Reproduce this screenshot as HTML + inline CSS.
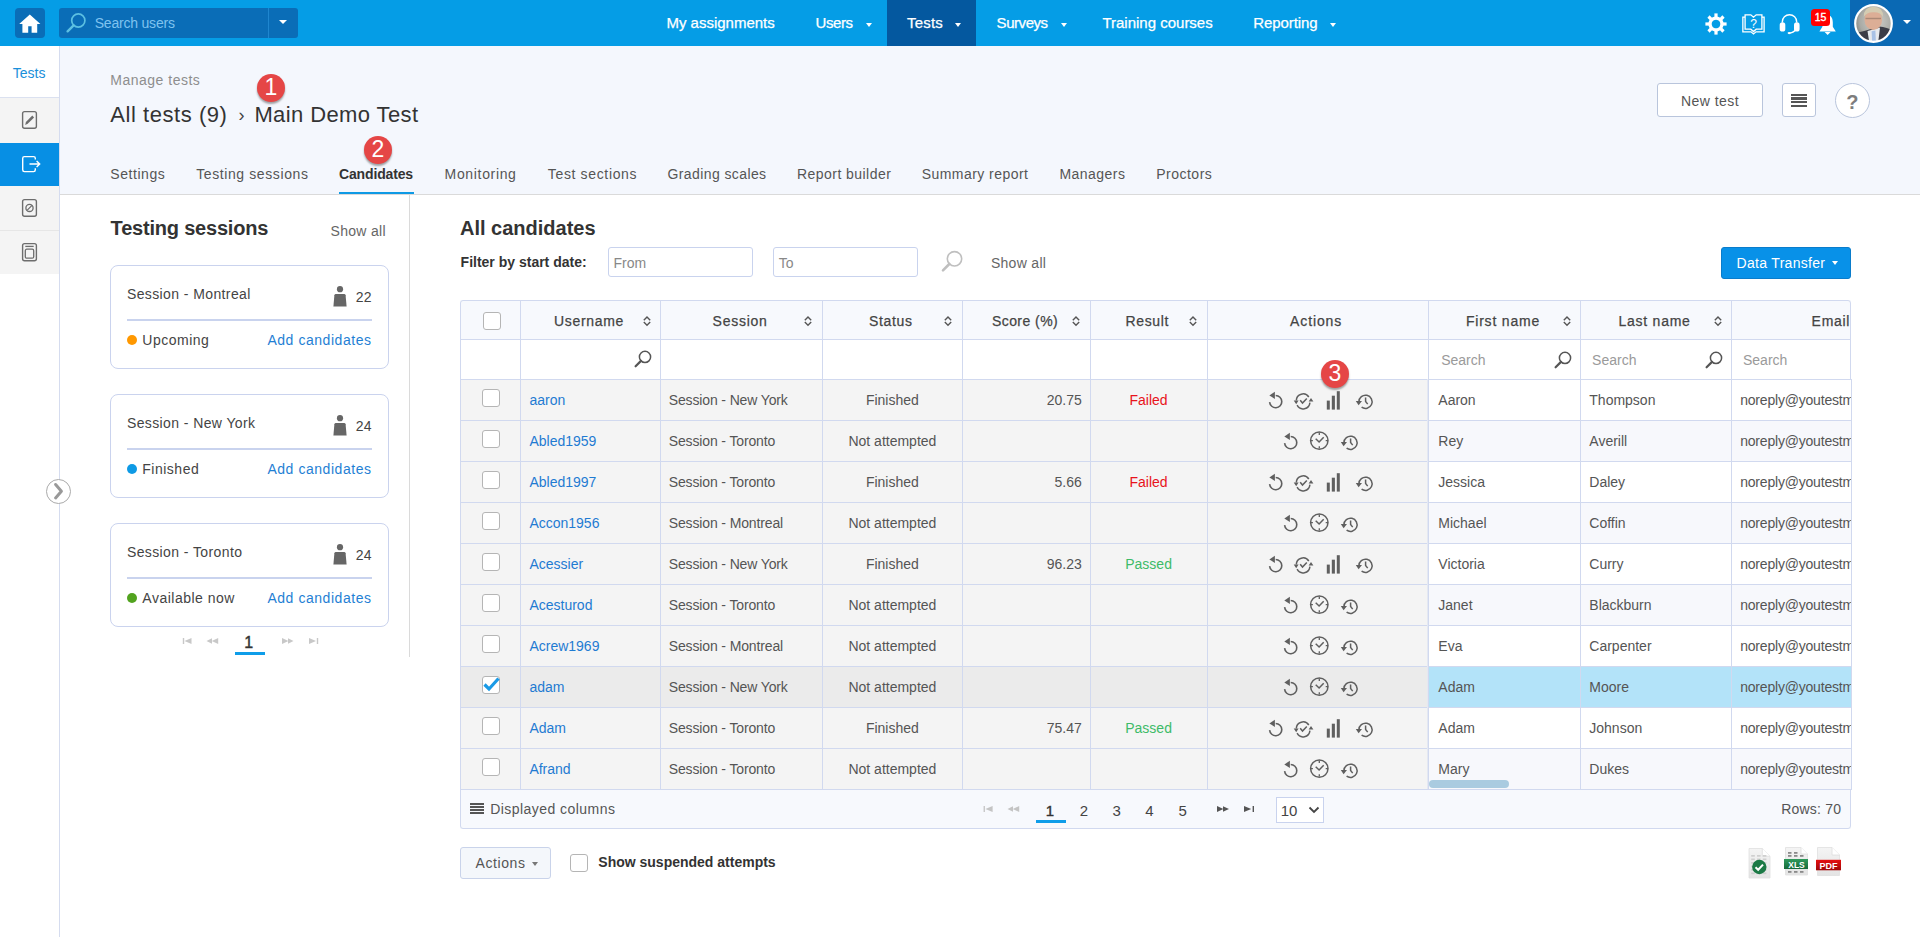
<!DOCTYPE html>
<html><head><meta charset="utf-8"><title>Candidates</title>
<style>
html,body{margin:0;padding:0;}
body{width:1920px;height:937px;position:relative;overflow:hidden;background:#fff;font-family:"Liberation Sans", sans-serif;}
.t{position:absolute;white-space:nowrap;font-family:"Liberation Sans", sans-serif;}
svg{overflow:visible}
</style></head><body>
<div style="position:absolute;left:0px;top:0px;width:1920px;height:46px;background:#059de6"></div>
<div style="position:absolute;left:15px;top:8px;width:30px;height:30px;background:#0a6db7;border-radius:4px"></div>
<svg style="position:absolute;left:15px;top:8px;" width="30" height="30" viewBox="0 0 30 30"><path d="M14.8 6.6 L25.4 16 L22.2 16 L22.2 24.8 L16.6 24.8 L16.6 18.2 L13.2 18.2 L13.2 24.8 L7.4 24.8 L7.4 16 L4.2 16 Z" fill="#fff"/></svg>
<div style="position:absolute;left:59px;top:8px;width:239px;height:30px;background:#0a6db7;border-radius:3px"></div>
<div style="position:absolute;left:268px;top:8px;width:1px;height:30px;background:#1f86cf"></div>
<svg style="position:absolute;left:62px;top:10px;" width="28" height="26" viewBox="0 0 28 26"><circle cx="16.3" cy="10.5" r="6.6" fill="none" stroke="#5cc0e2" stroke-width="1.7"/><line x1="11.6" y1="15.3" x2="5.6" y2="21.3" stroke="#5cc0e2" stroke-width="2.4" stroke-linecap="round"/></svg>
<div class="t" style="left:94.7px;top:15.8px;font-size:14px;line-height:14px;color:#7fc3ef;font-weight:400;letter-spacing:-0.2px;">Search users</div>
<div style="position:absolute;left:278.6px;top:19.6px;width:0;height:0;border-left:4.0px solid transparent;border-right:4.0px solid transparent;border-top:4.6px solid #fff"></div>
<div style="position:absolute;left:887px;top:0px;width:89px;height:46px;background:#04589f"></div>
<div class="t" style="left:666.4px;top:14.8px;font-size:15px;line-height:15px;color:#fff;font-weight:400;-webkit-text-stroke:0.25px #fff;">My assignments</div>
<div class="t" style="left:815.5px;top:14.8px;font-size:15px;line-height:15px;color:#fff;font-weight:400;letter-spacing:-0.4px;-webkit-text-stroke:0.25px #fff;">Users</div>
<div class="t" style="left:907.0px;top:14.8px;font-size:15px;line-height:15px;color:#fff;font-weight:400;letter-spacing:0.2px;-webkit-text-stroke:0.25px #fff;">Tests</div>
<div class="t" style="left:996.6px;top:14.8px;font-size:15px;line-height:15px;color:#fff;font-weight:400;letter-spacing:-0.45px;-webkit-text-stroke:0.25px #fff;">Surveys</div>
<div class="t" style="left:1102.4px;top:14.8px;font-size:15px;line-height:15px;color:#fff;font-weight:400;-webkit-text-stroke:0.25px #fff;">Training courses</div>
<div class="t" style="left:1253.3px;top:14.8px;font-size:15px;line-height:15px;color:#fff;font-weight:400;letter-spacing:-0.1px;-webkit-text-stroke:0.25px #fff;">Reporting</div>
<div style="position:absolute;left:866px;top:22.8px;width:0;height:0;border-left:3.75px solid transparent;border-right:3.75px solid transparent;border-top:4.5px solid #fff"></div>
<div style="position:absolute;left:955px;top:22.8px;width:0;height:0;border-left:3.75px solid transparent;border-right:3.75px solid transparent;border-top:4.5px solid #fff"></div>
<div style="position:absolute;left:1061px;top:22.8px;width:0;height:0;border-left:3.75px solid transparent;border-right:3.75px solid transparent;border-top:4.5px solid #fff"></div>
<div style="position:absolute;left:1330px;top:22.8px;width:0;height:0;border-left:3.75px solid transparent;border-right:3.75px solid transparent;border-top:4.5px solid #fff"></div>
<svg style="position:absolute;left:1704.5px;top:12.5px;" width="22" height="22" viewBox="0 0 22 22"><path fill="#fff" fill-rule="evenodd" d="M11 3.4 A7.6 7.6 0 1 1 10.99 3.4 Z M11 6.7 A4.3 4.3 0 1 0 11.01 6.7 Z"/><rect x="9.4" y="0.4" width="3.2" height="5" transform="rotate(0 11 11)" fill="#fff"/><rect x="9.4" y="0.4" width="3.2" height="5" transform="rotate(45 11 11)" fill="#fff"/><rect x="9.4" y="0.4" width="3.2" height="5" transform="rotate(90 11 11)" fill="#fff"/><rect x="9.4" y="0.4" width="3.2" height="5" transform="rotate(135 11 11)" fill="#fff"/><rect x="9.4" y="0.4" width="3.2" height="5" transform="rotate(180 11 11)" fill="#fff"/><rect x="9.4" y="0.4" width="3.2" height="5" transform="rotate(225 11 11)" fill="#fff"/><rect x="9.4" y="0.4" width="3.2" height="5" transform="rotate(270 11 11)" fill="#fff"/><rect x="9.4" y="0.4" width="3.2" height="5" transform="rotate(315 11 11)" fill="#fff"/></svg>
<svg style="position:absolute;left:1741px;top:12.5px;" width="25" height="23" viewBox="0 0 25 23"><path d="M4.1 4.2 H1.85 V18.8 H10 L12.5 21 L15 18.8 H23.1 V4.2 H20.9" fill="none" stroke="#fff" stroke-width="1.3"/><path d="M4.1 1.8 H9.8 L12.5 4.2 L15.2 1.8 H20.9 V16.2 H15.2 L12.5 18.6 L9.8 16.2 H4.1 Z" fill="none" stroke="#fff" stroke-width="1.3"/><text x="12.5" y="15.2" font-family="Liberation Sans" font-size="12" fill="#fff" text-anchor="middle">?</text></svg>
<svg style="position:absolute;left:1778.5px;top:12.5px;" width="21" height="23" viewBox="0 0 21 23"><path d="M3.3 9.5 V8.9 A7.2 7.2 0 0 1 17.7 8.9 V9.5" fill="none" stroke="#fff" stroke-width="1.4"/><rect x="0.7" y="9.3" width="5.6" height="9.3" rx="2.7" fill="#fff"/><rect x="15" y="9.3" width="5.6" height="9.3" rx="2.7" fill="#fff"/><path d="M16.2 17 Q15.2 19.2 10.6 20.1" fill="none" stroke="#fff" stroke-width="1.4" stroke-linecap="round"/><ellipse cx="10.2" cy="20.1" rx="1.6" ry="1.1" fill="#fff"/></svg>
<svg style="position:absolute;left:1818.5px;top:13.5px;" width="18" height="21" viewBox="0 0 18 21"><path d="M8.5 1.2 C4.6 1.2 3.4 4.8 3.4 8.5 V12.8 L0.4 17.5 H16.8 L13.8 12.8 V8.5 C13.8 4.8 12.4 1.2 8.5 1.2 Z" fill="#fff"/><path d="M5.6 18.1 L8.6 20.9 L11.6 18.1 Z" fill="#fff"/></svg>
<div style="position:absolute;left:1811px;top:9px;width:19px;height:17px;background:#f00;border-radius:3.5px"></div>
<div class="t" style="left:1520.5px;width:600px;text-align:center;top:12.3px;font-size:10.5px;line-height:10.5px;color:#fff;font-weight:400;-webkit-text-stroke:0.35px #fff;">15</div>
<div style="position:absolute;left:1850px;top:0px;width:70px;height:46px;background:#0a69b4"></div>
<svg style="position:absolute;left:1854px;top:4px;" width="39" height="39" viewBox="0 0 39 39"><defs><radialGradient id="bg" cx="55%" cy="45%" r="62%"><stop offset="0" stop-color="#d2d2cc"/><stop offset="0.6" stop-color="#a9aaa5"/><stop offset="1" stop-color="#5f605c"/></radialGradient><clipPath id="cp"><circle cx="19.5" cy="19.5" r="18"/></clipPath><filter id="bl"><feGaussianBlur stdDeviation="0.5"/></filter></defs><g clip-path="url(#cp)"><g filter="url(#bl)"><rect x="-2" y="-2" width="43" height="43" fill="url(#bg)"/><path d="M-1 40 L-1 31 Q5 27.5 12 26.5 L25 22.5 Q33 23 40 27 V40 Z" fill="#3b3e46"/><path d="M13.5 27 L19 25.5 L26 23.5 L24 40 L15.5 40 Z" fill="#e6eaee"/><path d="M17.6 27.2 L21.4 26.4 L22 40 L18.2 40 Z" fill="#a8c2e6"/><ellipse cx="19.3" cy="15.8" rx="8.8" ry="10.2" fill="#dcae96"/><path d="M9.8 13 Q9.5 3 19.5 2.8 Q29.5 3 29 13 Q27 8 19.5 8.2 Q12.5 8 9.8 13 Z" fill="#d4ccb2"/><rect x="11.5" y="13.8" width="15.5" height="1.4" fill="#7a6458" opacity="0.5"/></g></g><circle cx="19.5" cy="19.5" r="18.3" fill="none" stroke="#fff" stroke-width="2.2"/></svg>
<div style="position:absolute;left:1902.5px;top:19.8px;width:0;height:0;border-left:4.0px solid transparent;border-right:4.0px solid transparent;border-top:4.4px solid #fff"></div>
<div style="position:absolute;left:0px;top:46px;width:59px;height:891px;background:#fff"></div>
<div style="position:absolute;left:59px;top:46px;width:1px;height:891px;background:#d5dcef"></div>
<div class="t" style="left:12.8px;top:65.6px;font-size:14px;line-height:14px;color:#1a8fda;font-weight:400;">Tests</div>
<div style="position:absolute;left:0px;top:97px;width:59px;height:1px;background:#dbe1f0"></div>
<div style="position:absolute;left:0px;top:98px;width:59px;height:176px;background:#f4f4f4"></div>
<div style="position:absolute;left:0px;top:143px;width:59px;height:43px;background:#078fe4"></div>
<div style="position:absolute;left:0px;top:230px;width:59px;height:1px;background:#e6e6e6"></div>
<svg style="position:absolute;left:20px;top:109px;" width="19" height="22" viewBox="0 0 19 22"><rect x="2.6" y="2.6" width="13.8" height="16.6" rx="2" fill="none" stroke="#6d6d6d" stroke-width="1.4"/><path d="M5.2 16 L5.9 13 L12.3 6.6 L14.1 8.4 L7.7 14.8 Z" fill="#6d6d6d"/></svg>
<svg style="position:absolute;left:20px;top:154px;" width="23" height="21" viewBox="0 0 23 21"><path d="M15.3 5.6 V4.3 Q15.3 2.6 13.6 2.6 H4.4 Q2.7 2.6 2.7 4.3 V15.8 Q2.7 17.6 4.4 17.6 H13.6 Q15.3 17.6 15.3 15.8 V14.3" fill="none" stroke="#fff" stroke-width="1.4"/><path d="M9.5 10 H19.6 M16.6 7 L19.7 10 L16.6 13" fill="none" stroke="#fff" stroke-width="1.4"/></svg>
<svg style="position:absolute;left:20px;top:197px;" width="19" height="22" viewBox="0 0 19 22"><rect x="2.6" y="2.6" width="13.8" height="16.6" rx="2" fill="none" stroke="#6d6d6d" stroke-width="1.4"/><circle cx="9.5" cy="10.9" r="3.6" fill="none" stroke="#6d6d6d" stroke-width="1.3"/><line x1="7" y1="13.4" x2="12" y2="8.4" stroke="#6d6d6d" stroke-width="1.3"/></svg>
<svg style="position:absolute;left:20px;top:241px;" width="19" height="22" viewBox="0 0 19 22"><rect x="2.6" y="2.6" width="13.8" height="17.2" rx="2" fill="none" stroke="#6d6d6d" stroke-width="1.4"/><line x1="5.3" y1="5.4" x2="13.7" y2="5.4" stroke="#6d6d6d" stroke-width="1.3"/><rect x="5.3" y="8.2" width="8.4" height="9" rx="1.5" fill="none" stroke="#6d6d6d" stroke-width="1.3"/></svg>
<div style="position:absolute;left:60px;top:46px;width:1860px;height:148px;background:#f4f7fd"></div>
<div style="position:absolute;left:60px;top:194px;width:1860px;height:1px;background:#dadada"></div>
<div class="t" style="left:110.3px;top:73.2px;font-size:14px;line-height:14px;color:#8e8e8e;font-weight:400;letter-spacing:0.5px;">Manage tests</div>
<div class="t" style="left:110.3px;top:104.2px;font-size:22px;line-height:22px;color:#333;font-weight:400;letter-spacing:0.55px;">All tests (9)</div>
<div class="t" style="left:238.5px;top:106.3px;font-size:18px;line-height:18px;color:#444;font-weight:400;">&#8250;</div>
<div class="t" style="left:254.4px;top:104.2px;font-size:22px;line-height:22px;color:#333;font-weight:400;letter-spacing:0.4px;">Main Demo Test</div>
<div class="t" style="left:110.3px;top:167.1px;font-size:14px;line-height:14px;color:#555;font-weight:400;letter-spacing:0.55px;">Settings</div>
<div class="t" style="left:196.2px;top:167.1px;font-size:14px;line-height:14px;color:#555;font-weight:400;letter-spacing:0.6px;">Testing sessions</div>
<div class="t" style="left:444.6px;top:167.1px;font-size:14px;line-height:14px;color:#555;font-weight:400;letter-spacing:0.66px;">Monitoring</div>
<div class="t" style="left:547.8px;top:167.1px;font-size:14px;line-height:14px;color:#555;font-weight:400;letter-spacing:0.65px;">Test sections</div>
<div class="t" style="left:667.5px;top:167.1px;font-size:14px;line-height:14px;color:#555;font-weight:400;letter-spacing:0.4px;">Grading scales</div>
<div class="t" style="left:797.0px;top:167.1px;font-size:14px;line-height:14px;color:#555;font-weight:400;letter-spacing:0.45px;">Report builder</div>
<div class="t" style="left:921.7px;top:167.1px;font-size:14px;line-height:14px;color:#555;font-weight:400;letter-spacing:0.45px;">Summary report</div>
<div class="t" style="left:1059.5px;top:167.1px;font-size:14px;line-height:14px;color:#555;font-weight:400;letter-spacing:0.45px;">Managers</div>
<div class="t" style="left:1156.2px;top:167.1px;font-size:14px;line-height:14px;color:#555;font-weight:400;letter-spacing:0.5px;">Proctors</div>
<div class="t" style="left:339.0px;top:167.1px;font-size:14px;line-height:14px;color:#333;font-weight:700;letter-spacing:-0.15px;">Candidates</div>
<div style="position:absolute;left:339px;top:192px;width:75px;height:2px;background:#0e9ae5"></div>
<div style="position:absolute;left:1657px;top:83px;width:106px;height:34px;background:#fff;border:1px solid #b9c5dc;border-radius:3px;box-sizing:border-box"></div>
<div class="t" style="left:1681.0px;top:93.9px;font-size:14px;line-height:14px;color:#555;font-weight:400;letter-spacing:0.45px;">New test</div>
<div style="position:absolute;left:1782px;top:83px;width:34px;height:34px;background:#fff;border:1px solid #b9c5dc;border-radius:3px;box-sizing:border-box"></div>
<div style="position:absolute;left:1790.5px;top:93.6px;width:16px;height:2.3px;background:#555"></div>
<div style="position:absolute;left:1790.5px;top:97.3px;width:16px;height:2.3px;background:#555"></div>
<div style="position:absolute;left:1790.5px;top:101.0px;width:16px;height:2.3px;background:#555"></div>
<div style="position:absolute;left:1790.5px;top:104.69999999999999px;width:16px;height:2.3px;background:#555"></div>
<div style="position:absolute;left:1835px;top:83px;width:35px;height:35px;background:#fff;border:1px solid #b9c5dc;border-radius:50%;box-sizing:border-box"></div>
<div class="t" style="left:1552.3px;width:600px;text-align:center;top:91.9px;font-size:20px;line-height:20px;color:#7d7d7d;font-weight:700;">?</div>
<div style="position:absolute;left:256.7px;top:73.6px;width:28.4px;height:28.4px;border-radius:50%;background:#e54646;box-shadow:0 2px 2px rgba(0,0,0,0.35)"></div>
<div class="t" style="left:-29.1px;width:600px;text-align:center;top:75.6px;font-size:23px;line-height:23px;color:#fff;font-weight:400;">1</div>
<div style="position:absolute;left:363.8px;top:135.60000000000002px;width:28.4px;height:28.4px;border-radius:50%;background:#e54646;box-shadow:0 2px 2px rgba(0,0,0,0.35)"></div>
<div class="t" style="left:78.0px;width:600px;text-align:center;top:137.6px;font-size:23px;line-height:23px;color:#fff;font-weight:400;">2</div>
<div style="position:absolute;left:409px;top:195px;width:1px;height:462px;background:#dadada"></div>
<div class="t" style="left:110.6px;top:218.3px;font-size:20px;line-height:20px;color:#333;font-weight:700;letter-spacing:-0.2px;">Testing sessions</div>
<div class="t" style="left:330.5px;top:224.1px;font-size:14px;line-height:14px;color:#666;font-weight:400;letter-spacing:0.3px;">Show all</div>
<div style="position:absolute;left:110px;top:265px;width:279px;height:104px;background:#fff;border:1px solid #cad3ee;border-radius:8px;box-sizing:border-box"></div>
<div class="t" style="left:126.9px;top:286.9px;font-size:14px;line-height:14px;color:#444;font-weight:400;letter-spacing:0.4px;">Session - Montreal</div>
<svg style="position:absolute;left:332.6px;top:286px;" width="14" height="21" viewBox="0 0 14 21"><circle cx="7" cy="3.2" r="3.1" fill="#666"/><path d="M2.8 8 H11.2 Q12.3 8 12.6 9.2 L13.6 20.5 H0.4 L1.4 9.2 Q1.7 8 2.8 8 Z" fill="#666"/></svg>
<div class="t" style="right:1548.2px;top:290.3px;font-size:14px;line-height:14px;color:#444;font-weight:400;letter-spacing:0.3px;">22</div>
<div style="position:absolute;left:127px;top:319px;width:245px;height:2px;background:#c9d3ee"></div>
<div style="position:absolute;left:127px;top:335px;width:10.2px;height:10.2px;background:#ff9800;border-radius:50%"></div>
<div class="t" style="left:142.3px;top:332.5px;font-size:14px;line-height:14px;color:#444;font-weight:400;letter-spacing:0.5px;">Upcoming</div>
<div class="t" style="right:1548.4px;top:332.5px;font-size:14px;line-height:14px;color:#1f7fd4;font-weight:400;letter-spacing:0.55px;">Add candidates</div>
<div style="position:absolute;left:110px;top:394px;width:279px;height:104px;background:#fff;border:1px solid #cad3ee;border-radius:8px;box-sizing:border-box"></div>
<div class="t" style="left:126.9px;top:415.9px;font-size:14px;line-height:14px;color:#444;font-weight:400;letter-spacing:0.4px;">Session - New York</div>
<svg style="position:absolute;left:332.6px;top:415px;" width="14" height="21" viewBox="0 0 14 21"><circle cx="7" cy="3.2" r="3.1" fill="#666"/><path d="M2.8 8 H11.2 Q12.3 8 12.6 9.2 L13.6 20.5 H0.4 L1.4 9.2 Q1.7 8 2.8 8 Z" fill="#666"/></svg>
<div class="t" style="right:1548.2px;top:419.3px;font-size:14px;line-height:14px;color:#444;font-weight:400;letter-spacing:0.3px;">24</div>
<div style="position:absolute;left:127px;top:448px;width:245px;height:2px;background:#c9d3ee"></div>
<div style="position:absolute;left:127px;top:464px;width:10.2px;height:10.2px;background:#0e9ae5;border-radius:50%"></div>
<div class="t" style="left:142.3px;top:461.5px;font-size:14px;line-height:14px;color:#444;font-weight:400;letter-spacing:0.5px;">Finished</div>
<div class="t" style="right:1548.4px;top:461.5px;font-size:14px;line-height:14px;color:#1f7fd4;font-weight:400;letter-spacing:0.55px;">Add candidates</div>
<div style="position:absolute;left:110px;top:523px;width:279px;height:104px;background:#fff;border:1px solid #cad3ee;border-radius:8px;box-sizing:border-box"></div>
<div class="t" style="left:126.9px;top:544.9px;font-size:14px;line-height:14px;color:#444;font-weight:400;letter-spacing:0.4px;">Session - Toronto</div>
<svg style="position:absolute;left:332.6px;top:544px;" width="14" height="21" viewBox="0 0 14 21"><circle cx="7" cy="3.2" r="3.1" fill="#666"/><path d="M2.8 8 H11.2 Q12.3 8 12.6 9.2 L13.6 20.5 H0.4 L1.4 9.2 Q1.7 8 2.8 8 Z" fill="#666"/></svg>
<div class="t" style="right:1548.2px;top:548.3px;font-size:14px;line-height:14px;color:#444;font-weight:400;letter-spacing:0.3px;">24</div>
<div style="position:absolute;left:127px;top:577px;width:245px;height:2px;background:#c9d3ee"></div>
<div style="position:absolute;left:127px;top:593px;width:10.2px;height:10.2px;background:#52a31f;border-radius:50%"></div>
<div class="t" style="left:142.3px;top:590.5px;font-size:14px;line-height:14px;color:#444;font-weight:400;letter-spacing:0.5px;">Available now</div>
<div class="t" style="right:1548.4px;top:590.5px;font-size:14px;line-height:14px;color:#1f7fd4;font-weight:400;letter-spacing:0.55px;">Add candidates</div>
<svg style="position:absolute;left:182px;top:638px;" width="11" height="7" viewBox="0 0 11 7"><rect x="0.8" y="0" width="1.4" height="6" fill="#c8c8c8"/><path d="M2.5 3 L9.5 0 V6 Z" fill="#c8c8c8"/></svg>
<svg style="position:absolute;left:206px;top:638px;" width="13" height="7" viewBox="0 0 13 7"><path d="M0.5 3 L6 0.3 V5.7Z M5.8 3 L12.2 0 V6 Z" fill="#c8c8c8"/></svg>
<div class="t" style="left:-51.4px;width:600px;text-align:center;top:634.5px;font-size:16px;line-height:16px;color:#333;font-weight:400;-webkit-text-stroke:0.4px #333;">1</div>
<div style="position:absolute;left:235px;top:652px;width:30px;height:3px;background:#0e9de9"></div>
<svg style="position:absolute;left:282px;top:638px;" width="12" height="7" viewBox="0 0 12 7"><path d="M0 0 L6.4 3 L0 6Z M6 0.3 L11.5 3 L6 5.7Z" fill="#c8c8c8"/></svg>
<svg style="position:absolute;left:309px;top:638px;" width="10" height="7" viewBox="0 0 10 7"><path d="M0 0 L7 3 L0 6Z" fill="#c8c8c8"/><rect x="7.8" y="0" width="1.4" height="6" fill="#c8c8c8"/></svg>
<div class="t" style="left:460.0px;top:218.3px;font-size:20px;line-height:20px;color:#333;font-weight:700;">All candidates</div>
<div class="t" style="left:460.6px;top:255.3px;font-size:14px;line-height:14px;color:#333;font-weight:700;">Filter by start date:</div>
<div style="position:absolute;left:608px;top:247px;width:145px;height:30px;background:#fff;border:1px solid #c9d3ee;border-radius:3px;box-sizing:border-box"></div>
<div class="t" style="left:613.5px;top:255.9px;font-size:14px;line-height:14px;color:#888;font-weight:400;">From</div>
<div style="position:absolute;left:773px;top:247px;width:145px;height:30px;background:#fff;border:1px solid #c9d3ee;border-radius:3px;box-sizing:border-box"></div>
<div class="t" style="left:778.8px;top:255.9px;font-size:14px;line-height:14px;color:#888;font-weight:400;">To</div>
<svg style="position:absolute;left:940px;top:250px;" width="24" height="23" viewBox="0 0 24 23"><circle cx="14.5" cy="8.8" r="7.2" fill="none" stroke="#bfbfbf" stroke-width="1.6"/><line x1="9.3" y1="14" x2="3" y2="20.3" stroke="#bfbfbf" stroke-width="2.6" stroke-linecap="round"/></svg>
<div class="t" style="left:990.9px;top:256.2px;font-size:14px;line-height:14px;color:#666;font-weight:400;letter-spacing:0.3px;">Show all</div>
<div style="position:absolute;left:1721px;top:247px;width:130px;height:32px;background:#0891e8;border:1px solid #0a7ccb;border-radius:3px;box-sizing:border-box"></div>
<div class="t" style="left:1736.6px;top:256.3px;font-size:14px;line-height:14px;color:#fff;font-weight:400;letter-spacing:0.3px;">Data Transfer</div>
<div style="position:absolute;left:1832px;top:261px;width:0;height:0;border-left:3.75px solid transparent;border-right:3.75px solid transparent;border-top:4.2px solid #fff"></div>
<div style="position:absolute;left:460px;top:300px;width:1391px;height:39px;background:#f7f9fd"></div>
<div style="position:absolute;left:460px;top:339px;width:1391px;height:40px;background:#fff"></div>
<div style="position:absolute;left:460px;top:379px;width:968px;height:41px;background:#f4f4f4"></div>
<div style="position:absolute;left:1429px;top:379px;width:422px;height:41px;background:#ffffff"></div>
<div style="position:absolute;left:460px;top:420px;width:968px;height:41px;background:#f4f4f4"></div>
<div style="position:absolute;left:1429px;top:420px;width:422px;height:41px;background:#f7f8fc"></div>
<div style="position:absolute;left:460px;top:461px;width:968px;height:41px;background:#f4f4f4"></div>
<div style="position:absolute;left:1429px;top:461px;width:422px;height:41px;background:#ffffff"></div>
<div style="position:absolute;left:460px;top:502px;width:968px;height:41px;background:#f4f4f4"></div>
<div style="position:absolute;left:1429px;top:502px;width:422px;height:41px;background:#f7f8fc"></div>
<div style="position:absolute;left:460px;top:543px;width:968px;height:41px;background:#f4f4f4"></div>
<div style="position:absolute;left:1429px;top:543px;width:422px;height:41px;background:#ffffff"></div>
<div style="position:absolute;left:460px;top:584px;width:968px;height:41px;background:#f4f4f4"></div>
<div style="position:absolute;left:1429px;top:584px;width:422px;height:41px;background:#f7f8fc"></div>
<div style="position:absolute;left:460px;top:625px;width:968px;height:41px;background:#f4f4f4"></div>
<div style="position:absolute;left:1429px;top:625px;width:422px;height:41px;background:#ffffff"></div>
<div style="position:absolute;left:460px;top:666px;width:968px;height:41px;background:#ebebeb"></div>
<div style="position:absolute;left:1429px;top:666px;width:422px;height:41px;background:#b3e3f9"></div>
<div style="position:absolute;left:460px;top:707px;width:968px;height:41px;background:#f4f4f4"></div>
<div style="position:absolute;left:1429px;top:707px;width:422px;height:41px;background:#ffffff"></div>
<div style="position:absolute;left:460px;top:748px;width:968px;height:41px;background:#f4f4f4"></div>
<div style="position:absolute;left:1429px;top:748px;width:422px;height:41px;background:#f7f8fc"></div>
<div style="position:absolute;left:460px;top:789px;width:1391px;height:40px;background:#f7f9fd"></div>
<div style="position:absolute;left:460px;top:339px;width:1391px;height:1px;background:#d1d9ef"></div>
<div style="position:absolute;left:460px;top:379px;width:1391px;height:1px;background:#d1d9ef"></div>
<div style="position:absolute;left:460px;top:420px;width:1391px;height:1px;background:#d1d9ef"></div>
<div style="position:absolute;left:460px;top:461px;width:1391px;height:1px;background:#d1d9ef"></div>
<div style="position:absolute;left:460px;top:502px;width:1391px;height:1px;background:#d1d9ef"></div>
<div style="position:absolute;left:460px;top:543px;width:1391px;height:1px;background:#d1d9ef"></div>
<div style="position:absolute;left:460px;top:584px;width:1391px;height:1px;background:#d1d9ef"></div>
<div style="position:absolute;left:460px;top:625px;width:1391px;height:1px;background:#d1d9ef"></div>
<div style="position:absolute;left:460px;top:666px;width:1391px;height:1px;background:#d1d9ef"></div>
<div style="position:absolute;left:460px;top:707px;width:1391px;height:1px;background:#d1d9ef"></div>
<div style="position:absolute;left:460px;top:748px;width:1391px;height:1px;background:#d1d9ef"></div>
<div style="position:absolute;left:460px;top:789px;width:1391px;height:1px;background:#d1d9ef"></div>
<div style="position:absolute;left:520px;top:300px;width:1px;height:489px;background:#d1d9ef"></div>
<div style="position:absolute;left:660px;top:300px;width:1px;height:489px;background:#d1d9ef"></div>
<div style="position:absolute;left:822px;top:300px;width:1px;height:489px;background:#d1d9ef"></div>
<div style="position:absolute;left:962px;top:300px;width:1px;height:489px;background:#d1d9ef"></div>
<div style="position:absolute;left:1090px;top:300px;width:1px;height:489px;background:#d1d9ef"></div>
<div style="position:absolute;left:1207px;top:300px;width:1px;height:489px;background:#d1d9ef"></div>
<div style="position:absolute;left:1428px;top:300px;width:1px;height:489px;background:#d1d9ef"></div>
<div style="position:absolute;left:1580px;top:300px;width:1px;height:489px;background:#d1d9ef"></div>
<div style="position:absolute;left:1731px;top:300px;width:1px;height:489px;background:#d1d9ef"></div>
<div style="position:absolute;left:1427px;top:379px;width:1px;height:410px;background:#e4e8f2"></div>
<div style="position:absolute;left:460px;top:300px;width:1391px;height:529px;border:1px solid #d1d9ef;border-radius:3px;box-sizing:border-box"></div>
<div style="position:absolute;left:1850px;top:380px;width:1px;height:40px;background:#ffffff"></div>
<div style="position:absolute;left:1850px;top:421px;width:1px;height:40px;background:#f7f8fc"></div>
<div style="position:absolute;left:1850px;top:462px;width:1px;height:40px;background:#ffffff"></div>
<div style="position:absolute;left:1850px;top:503px;width:1px;height:40px;background:#f7f8fc"></div>
<div style="position:absolute;left:1850px;top:544px;width:1px;height:40px;background:#ffffff"></div>
<div style="position:absolute;left:1850px;top:585px;width:1px;height:40px;background:#f7f8fc"></div>
<div style="position:absolute;left:1850px;top:626px;width:1px;height:40px;background:#ffffff"></div>
<div style="position:absolute;left:1850px;top:667px;width:1px;height:40px;background:#b3e3f9"></div>
<div style="position:absolute;left:1850px;top:708px;width:1px;height:40px;background:#ffffff"></div>
<div style="position:absolute;left:1850px;top:749px;width:1px;height:40px;background:#f7f8fc"></div>
<div style="position:absolute;left:1851px;top:379px;width:1px;height:411px;background:#d1d9ef"></div>
<div style="position:absolute;left:483px;top:312px;width:18px;height:18px;background:#fff;border:1px solid #b5b5b5;border-radius:3px;box-sizing:border-box"></div>
<div class="t" style="left:553.9px;top:314.1px;font-size:14px;line-height:14px;color:#444;font-weight:400;letter-spacing:0.7px;-webkit-text-stroke:0.25px #444;">Username</div>
<svg style="position:absolute;left:642.6px;top:316.2px;" width="8" height="10.2" viewBox="0 0 8 10.2"><path d="M0.8 4.2 L4 1 L7.2 4.2 M0.8 6 L4 9.2 L7.2 6" fill="none" stroke="#555" stroke-width="1.4"/></svg>
<div class="t" style="left:712.6px;top:314.1px;font-size:14px;line-height:14px;color:#444;font-weight:400;letter-spacing:0.75px;-webkit-text-stroke:0.25px #444;">Session</div>
<svg style="position:absolute;left:804.4px;top:316.2px;" width="8" height="10.2" viewBox="0 0 8 10.2"><path d="M0.8 4.2 L4 1 L7.2 4.2 M0.8 6 L4 9.2 L7.2 6" fill="none" stroke="#555" stroke-width="1.4"/></svg>
<div class="t" style="left:868.9px;top:314.1px;font-size:14px;line-height:14px;color:#444;font-weight:400;letter-spacing:0.7px;-webkit-text-stroke:0.25px #444;">Status</div>
<svg style="position:absolute;left:944.4px;top:316.2px;" width="8" height="10.2" viewBox="0 0 8 10.2"><path d="M0.8 4.2 L4 1 L7.2 4.2 M0.8 6 L4 9.2 L7.2 6" fill="none" stroke="#555" stroke-width="1.4"/></svg>
<div class="t" style="left:991.9px;top:314.1px;font-size:14px;line-height:14px;color:#444;font-weight:400;letter-spacing:0.45px;-webkit-text-stroke:0.25px #444;">Score (%)</div>
<svg style="position:absolute;left:1072.4px;top:316.2px;" width="8" height="10.2" viewBox="0 0 8 10.2"><path d="M0.8 4.2 L4 1 L7.2 4.2 M0.8 6 L4 9.2 L7.2 6" fill="none" stroke="#555" stroke-width="1.4"/></svg>
<div class="t" style="left:1125.5px;top:314.1px;font-size:14px;line-height:14px;color:#444;font-weight:400;letter-spacing:0.65px;-webkit-text-stroke:0.25px #444;">Result</div>
<svg style="position:absolute;left:1189.4px;top:316.2px;" width="8" height="10.2" viewBox="0 0 8 10.2"><path d="M0.8 4.2 L4 1 L7.2 4.2 M0.8 6 L4 9.2 L7.2 6" fill="none" stroke="#555" stroke-width="1.4"/></svg>
<div class="t" style="left:1290.0px;top:314.1px;font-size:14px;line-height:14px;color:#444;font-weight:400;letter-spacing:0.9px;-webkit-text-stroke:0.25px #444;">Actions</div>
<div class="t" style="left:1465.9px;top:314.1px;font-size:14px;line-height:14px;color:#444;font-weight:400;letter-spacing:0.8px;-webkit-text-stroke:0.25px #444;">First name</div>
<svg style="position:absolute;left:1563px;top:316.2px;" width="8" height="10.2" viewBox="0 0 8 10.2"><path d="M0.8 4.2 L4 1 L7.2 4.2 M0.8 6 L4 9.2 L7.2 6" fill="none" stroke="#555" stroke-width="1.4"/></svg>
<div class="t" style="left:1618.5px;top:314.1px;font-size:14px;line-height:14px;color:#444;font-weight:400;letter-spacing:0.75px;-webkit-text-stroke:0.25px #444;">Last name</div>
<svg style="position:absolute;left:1713.8px;top:316.2px;" width="8" height="10.2" viewBox="0 0 8 10.2"><path d="M0.8 4.2 L4 1 L7.2 4.2 M0.8 6 L4 9.2 L7.2 6" fill="none" stroke="#555" stroke-width="1.4"/></svg>
<div style="position:absolute;left:1732px;top:300px;width:118px;height:39px;overflow:hidden">
<div class="t" style="left:79.6px;top:14.1px;font-size:14px;line-height:14px;color:#444;font-weight:400;letter-spacing:0.7px;-webkit-text-stroke:0.25px #444;">Email</div>
</div>
<svg style="position:absolute;left:633.5px;top:350.3px;" width="18" height="18" viewBox="0 0 18 18"><circle cx="11" cy="6.9" r="5.6" fill="none" stroke="#555" stroke-width="1.5"/><line x1="7" y1="10.9" x2="1.6" y2="16.3" stroke="#555" stroke-width="2.2" stroke-linecap="round"/></svg>
<svg style="position:absolute;left:1553.5px;top:350.5px;" width="18" height="18" viewBox="0 0 18 18"><circle cx="11" cy="6.9" r="5.6" fill="none" stroke="#555" stroke-width="1.5"/><line x1="7" y1="10.9" x2="1.6" y2="16.3" stroke="#555" stroke-width="2.2" stroke-linecap="round"/></svg>
<svg style="position:absolute;left:1704.5px;top:350.5px;" width="18" height="18" viewBox="0 0 18 18"><circle cx="11" cy="6.9" r="5.6" fill="none" stroke="#555" stroke-width="1.5"/><line x1="7" y1="10.9" x2="1.6" y2="16.3" stroke="#555" stroke-width="2.2" stroke-linecap="round"/></svg>
<div class="t" style="left:1441.2px;top:353.1px;font-size:14px;line-height:14px;color:#9a9a9a;font-weight:400;">Search</div>
<div class="t" style="left:1592.1px;top:353.1px;font-size:14px;line-height:14px;color:#9a9a9a;font-weight:400;">Search</div>
<div class="t" style="left:1743.0px;top:353.1px;font-size:14px;line-height:14px;color:#9a9a9a;font-weight:400;">Search</div>
<div style="position:absolute;left:482.3px;top:389.4px;width:18px;height:18px;background:#fff;border:1px solid #b5b5b5;border-radius:3px;box-sizing:border-box"></div>
<div class="t" style="left:529.4px;top:393.1px;font-size:14px;line-height:14px;color:#1f7bd2;font-weight:400;">aaron</div>
<div class="t" style="left:668.7px;top:393.1px;font-size:14px;line-height:14px;color:#555;font-weight:400;letter-spacing:-0.13px;">Session - New York</div>
<div class="t" style="left:592.4px;width:600px;text-align:center;top:393.1px;font-size:14px;line-height:14px;color:#555;font-weight:400;">Finished</div>
<div class="t" style="right:838.2px;top:393.1px;font-size:14px;line-height:14px;color:#555;font-weight:400;">20.75</div>
<div class="t" style="left:848.6px;width:600px;text-align:center;top:393.1px;font-size:14px;line-height:14px;color:#e8131b;font-weight:400;">Failed</div>
<svg style="position:absolute;left:1268px;top:390px;" width="16" height="20" viewBox="0 0 16 20"><path d="M7.7 5.5 A6.1 6.1 0 1 1 1.6 12.2" fill="none" stroke="#5f5f5f" stroke-width="1.6"/><path d="M1.3 5.4 L6.9 1.8 L6.9 8.9 Z" fill="#5f5f5f"/></svg>
<svg style="position:absolute;left:1293px;top:390px;" width="21" height="20" viewBox="0 0 21 20"><path d="M15.8 7.0 A6.8 6.8 0 0 0 3.3 10.6 M4.1 15.2 A6.8 6.8 0 0 0 16.9 12.6" fill="none" stroke="#5f5f5f" stroke-width="1.5"/><path d="M0.7 10.6 L5.6 10.6 L3.2 14.3 Z M15.6 11.6 L20.4 11.6 L18.0 7.9 Z" fill="#5f5f5f"/><path d="M7.2 10.2 L9.5 13.0 L13.8 8.4" fill="none" stroke="#5f5f5f" stroke-width="1.5"/></svg>
<svg style="position:absolute;left:1326.2px;top:391.2px;" width="14" height="19" viewBox="0 0 14 19"><rect x="0.8" y="9.6" width="3" height="9" fill="#5f5f5f"/><rect x="5.8" y="4.7" width="3.1" height="13.9" fill="#5f5f5f"/><rect x="10.8" y="0.2" width="3" height="18.4" fill="#5f5f5f"/></svg>
<svg style="position:absolute;left:1354.3px;top:392px;" width="20" height="19" viewBox="0 0 20 19"><path d="M4.9 9.75 A6.6 6.6 0 1 1 7.6 15.1" fill="none" stroke="#5f5f5f" stroke-width="1.5"/><path d="M1.8 9.1 L8.0 9.1 L4.6 13.2 Z" fill="#5f5f5f"/><path d="M11.6 5.4 V9.5 L13.7 12.1" fill="none" stroke="#5f5f5f" stroke-width="1.5"/></svg>
<div class="t" style="left:1438.3px;top:393.1px;font-size:14px;line-height:14px;color:#555;font-weight:400;">Aaron</div>
<div class="t" style="left:1589.3px;top:393.1px;font-size:14px;line-height:14px;color:#555;font-weight:400;">Thompson</div>
<div style="position:absolute;left:1732px;top:380px;width:119px;height:40px;overflow:hidden">
<div class="t" style="left:8.2px;top:13.1px;font-size:14px;line-height:14px;color:#555;font-weight:400;letter-spacing:-0.2px;">noreply@youtestme.com</div>
</div>
<div style="position:absolute;left:482.3px;top:430.4px;width:18px;height:18px;background:#fff;border:1px solid #b5b5b5;border-radius:3px;box-sizing:border-box"></div>
<div class="t" style="left:529.4px;top:434.1px;font-size:14px;line-height:14px;color:#1f7bd2;font-weight:400;">Abled1959</div>
<div class="t" style="left:668.7px;top:434.1px;font-size:14px;line-height:14px;color:#555;font-weight:400;letter-spacing:-0.13px;">Session - Toronto</div>
<div class="t" style="left:592.4px;width:600px;text-align:center;top:434.1px;font-size:14px;line-height:14px;color:#555;font-weight:400;">Not attempted</div>
<svg style="position:absolute;left:1283.2px;top:431px;" width="16" height="20" viewBox="0 0 16 20"><path d="M7.7 5.5 A6.1 6.1 0 1 1 1.6 12.2" fill="none" stroke="#5f5f5f" stroke-width="1.6"/><path d="M1.3 5.4 L6.9 1.8 L6.9 8.9 Z" fill="#5f5f5f"/></svg>
<svg style="position:absolute;left:1309px;top:431px;" width="21" height="20" viewBox="0 0 21 20"><circle cx="10.3" cy="9.6" r="8.7" fill="none" stroke="#5f5f5f" stroke-width="1.5"/><path d="M10.3 1.6 V3.9 M10.3 15.3 V17.6 M1.6 9.6 H3.9 M16.7 9.6 H19" stroke="#5f5f5f" stroke-width="1.3"/><path d="M6.7 7.8 L10.1 11.0 L14.7 6.2" fill="none" stroke="#5f5f5f" stroke-width="1.5"/></svg>
<svg style="position:absolute;left:1339px;top:433px;" width="20" height="19" viewBox="0 0 20 19"><path d="M4.9 9.75 A6.6 6.6 0 1 1 7.6 15.1" fill="none" stroke="#5f5f5f" stroke-width="1.5"/><path d="M1.8 9.1 L8.0 9.1 L4.6 13.2 Z" fill="#5f5f5f"/><path d="M11.6 5.4 V9.5 L13.7 12.1" fill="none" stroke="#5f5f5f" stroke-width="1.5"/></svg>
<div class="t" style="left:1438.3px;top:434.1px;font-size:14px;line-height:14px;color:#555;font-weight:400;">Rey</div>
<div class="t" style="left:1589.3px;top:434.1px;font-size:14px;line-height:14px;color:#555;font-weight:400;">Averill</div>
<div style="position:absolute;left:1732px;top:421px;width:119px;height:40px;overflow:hidden">
<div class="t" style="left:8.2px;top:13.1px;font-size:14px;line-height:14px;color:#555;font-weight:400;letter-spacing:-0.2px;">noreply@youtestme.com</div>
</div>
<div style="position:absolute;left:482.3px;top:471.4px;width:18px;height:18px;background:#fff;border:1px solid #b5b5b5;border-radius:3px;box-sizing:border-box"></div>
<div class="t" style="left:529.4px;top:475.1px;font-size:14px;line-height:14px;color:#1f7bd2;font-weight:400;">Abled1997</div>
<div class="t" style="left:668.7px;top:475.1px;font-size:14px;line-height:14px;color:#555;font-weight:400;letter-spacing:-0.13px;">Session - Toronto</div>
<div class="t" style="left:592.4px;width:600px;text-align:center;top:475.1px;font-size:14px;line-height:14px;color:#555;font-weight:400;">Finished</div>
<div class="t" style="right:838.2px;top:475.1px;font-size:14px;line-height:14px;color:#555;font-weight:400;">5.66</div>
<div class="t" style="left:848.6px;width:600px;text-align:center;top:475.1px;font-size:14px;line-height:14px;color:#e8131b;font-weight:400;">Failed</div>
<svg style="position:absolute;left:1268px;top:472px;" width="16" height="20" viewBox="0 0 16 20"><path d="M7.7 5.5 A6.1 6.1 0 1 1 1.6 12.2" fill="none" stroke="#5f5f5f" stroke-width="1.6"/><path d="M1.3 5.4 L6.9 1.8 L6.9 8.9 Z" fill="#5f5f5f"/></svg>
<svg style="position:absolute;left:1293px;top:472px;" width="21" height="20" viewBox="0 0 21 20"><path d="M15.8 7.0 A6.8 6.8 0 0 0 3.3 10.6 M4.1 15.2 A6.8 6.8 0 0 0 16.9 12.6" fill="none" stroke="#5f5f5f" stroke-width="1.5"/><path d="M0.7 10.6 L5.6 10.6 L3.2 14.3 Z M15.6 11.6 L20.4 11.6 L18.0 7.9 Z" fill="#5f5f5f"/><path d="M7.2 10.2 L9.5 13.0 L13.8 8.4" fill="none" stroke="#5f5f5f" stroke-width="1.5"/></svg>
<svg style="position:absolute;left:1326.2px;top:473.2px;" width="14" height="19" viewBox="0 0 14 19"><rect x="0.8" y="9.6" width="3" height="9" fill="#5f5f5f"/><rect x="5.8" y="4.7" width="3.1" height="13.9" fill="#5f5f5f"/><rect x="10.8" y="0.2" width="3" height="18.4" fill="#5f5f5f"/></svg>
<svg style="position:absolute;left:1354.3px;top:474px;" width="20" height="19" viewBox="0 0 20 19"><path d="M4.9 9.75 A6.6 6.6 0 1 1 7.6 15.1" fill="none" stroke="#5f5f5f" stroke-width="1.5"/><path d="M1.8 9.1 L8.0 9.1 L4.6 13.2 Z" fill="#5f5f5f"/><path d="M11.6 5.4 V9.5 L13.7 12.1" fill="none" stroke="#5f5f5f" stroke-width="1.5"/></svg>
<div class="t" style="left:1438.3px;top:475.1px;font-size:14px;line-height:14px;color:#555;font-weight:400;">Jessica</div>
<div class="t" style="left:1589.3px;top:475.1px;font-size:14px;line-height:14px;color:#555;font-weight:400;">Daley</div>
<div style="position:absolute;left:1732px;top:462px;width:119px;height:40px;overflow:hidden">
<div class="t" style="left:8.2px;top:13.1px;font-size:14px;line-height:14px;color:#555;font-weight:400;letter-spacing:-0.2px;">noreply@youtestme.com</div>
</div>
<div style="position:absolute;left:482.3px;top:512.4px;width:18px;height:18px;background:#fff;border:1px solid #b5b5b5;border-radius:3px;box-sizing:border-box"></div>
<div class="t" style="left:529.4px;top:516.1px;font-size:14px;line-height:14px;color:#1f7bd2;font-weight:400;">Accon1956</div>
<div class="t" style="left:668.7px;top:516.1px;font-size:14px;line-height:14px;color:#555;font-weight:400;letter-spacing:-0.13px;">Session - Montreal</div>
<div class="t" style="left:592.4px;width:600px;text-align:center;top:516.1px;font-size:14px;line-height:14px;color:#555;font-weight:400;">Not attempted</div>
<svg style="position:absolute;left:1283.2px;top:513px;" width="16" height="20" viewBox="0 0 16 20"><path d="M7.7 5.5 A6.1 6.1 0 1 1 1.6 12.2" fill="none" stroke="#5f5f5f" stroke-width="1.6"/><path d="M1.3 5.4 L6.9 1.8 L6.9 8.9 Z" fill="#5f5f5f"/></svg>
<svg style="position:absolute;left:1309px;top:513px;" width="21" height="20" viewBox="0 0 21 20"><circle cx="10.3" cy="9.6" r="8.7" fill="none" stroke="#5f5f5f" stroke-width="1.5"/><path d="M10.3 1.6 V3.9 M10.3 15.3 V17.6 M1.6 9.6 H3.9 M16.7 9.6 H19" stroke="#5f5f5f" stroke-width="1.3"/><path d="M6.7 7.8 L10.1 11.0 L14.7 6.2" fill="none" stroke="#5f5f5f" stroke-width="1.5"/></svg>
<svg style="position:absolute;left:1339px;top:515px;" width="20" height="19" viewBox="0 0 20 19"><path d="M4.9 9.75 A6.6 6.6 0 1 1 7.6 15.1" fill="none" stroke="#5f5f5f" stroke-width="1.5"/><path d="M1.8 9.1 L8.0 9.1 L4.6 13.2 Z" fill="#5f5f5f"/><path d="M11.6 5.4 V9.5 L13.7 12.1" fill="none" stroke="#5f5f5f" stroke-width="1.5"/></svg>
<div class="t" style="left:1438.3px;top:516.1px;font-size:14px;line-height:14px;color:#555;font-weight:400;">Michael</div>
<div class="t" style="left:1589.3px;top:516.1px;font-size:14px;line-height:14px;color:#555;font-weight:400;">Coffin</div>
<div style="position:absolute;left:1732px;top:503px;width:119px;height:40px;overflow:hidden">
<div class="t" style="left:8.2px;top:13.1px;font-size:14px;line-height:14px;color:#555;font-weight:400;letter-spacing:-0.2px;">noreply@youtestme.com</div>
</div>
<div style="position:absolute;left:482.3px;top:553.4px;width:18px;height:18px;background:#fff;border:1px solid #b5b5b5;border-radius:3px;box-sizing:border-box"></div>
<div class="t" style="left:529.4px;top:557.1px;font-size:14px;line-height:14px;color:#1f7bd2;font-weight:400;">Acessier</div>
<div class="t" style="left:668.7px;top:557.1px;font-size:14px;line-height:14px;color:#555;font-weight:400;letter-spacing:-0.13px;">Session - New York</div>
<div class="t" style="left:592.4px;width:600px;text-align:center;top:557.1px;font-size:14px;line-height:14px;color:#555;font-weight:400;">Finished</div>
<div class="t" style="right:838.2px;top:557.1px;font-size:14px;line-height:14px;color:#555;font-weight:400;">96.23</div>
<div class="t" style="left:848.6px;width:600px;text-align:center;top:557.1px;font-size:14px;line-height:14px;color:#3dbb68;font-weight:400;">Passed</div>
<svg style="position:absolute;left:1268px;top:554px;" width="16" height="20" viewBox="0 0 16 20"><path d="M7.7 5.5 A6.1 6.1 0 1 1 1.6 12.2" fill="none" stroke="#5f5f5f" stroke-width="1.6"/><path d="M1.3 5.4 L6.9 1.8 L6.9 8.9 Z" fill="#5f5f5f"/></svg>
<svg style="position:absolute;left:1293px;top:554px;" width="21" height="20" viewBox="0 0 21 20"><path d="M15.8 7.0 A6.8 6.8 0 0 0 3.3 10.6 M4.1 15.2 A6.8 6.8 0 0 0 16.9 12.6" fill="none" stroke="#5f5f5f" stroke-width="1.5"/><path d="M0.7 10.6 L5.6 10.6 L3.2 14.3 Z M15.6 11.6 L20.4 11.6 L18.0 7.9 Z" fill="#5f5f5f"/><path d="M7.2 10.2 L9.5 13.0 L13.8 8.4" fill="none" stroke="#5f5f5f" stroke-width="1.5"/></svg>
<svg style="position:absolute;left:1326.2px;top:555.2px;" width="14" height="19" viewBox="0 0 14 19"><rect x="0.8" y="9.6" width="3" height="9" fill="#5f5f5f"/><rect x="5.8" y="4.7" width="3.1" height="13.9" fill="#5f5f5f"/><rect x="10.8" y="0.2" width="3" height="18.4" fill="#5f5f5f"/></svg>
<svg style="position:absolute;left:1354.3px;top:556px;" width="20" height="19" viewBox="0 0 20 19"><path d="M4.9 9.75 A6.6 6.6 0 1 1 7.6 15.1" fill="none" stroke="#5f5f5f" stroke-width="1.5"/><path d="M1.8 9.1 L8.0 9.1 L4.6 13.2 Z" fill="#5f5f5f"/><path d="M11.6 5.4 V9.5 L13.7 12.1" fill="none" stroke="#5f5f5f" stroke-width="1.5"/></svg>
<div class="t" style="left:1438.3px;top:557.1px;font-size:14px;line-height:14px;color:#555;font-weight:400;">Victoria</div>
<div class="t" style="left:1589.3px;top:557.1px;font-size:14px;line-height:14px;color:#555;font-weight:400;">Curry</div>
<div style="position:absolute;left:1732px;top:544px;width:119px;height:40px;overflow:hidden">
<div class="t" style="left:8.2px;top:13.1px;font-size:14px;line-height:14px;color:#555;font-weight:400;letter-spacing:-0.2px;">noreply@youtestme.com</div>
</div>
<div style="position:absolute;left:482.3px;top:594.4px;width:18px;height:18px;background:#fff;border:1px solid #b5b5b5;border-radius:3px;box-sizing:border-box"></div>
<div class="t" style="left:529.4px;top:598.1px;font-size:14px;line-height:14px;color:#1f7bd2;font-weight:400;">Acesturod</div>
<div class="t" style="left:668.7px;top:598.1px;font-size:14px;line-height:14px;color:#555;font-weight:400;letter-spacing:-0.13px;">Session - Toronto</div>
<div class="t" style="left:592.4px;width:600px;text-align:center;top:598.1px;font-size:14px;line-height:14px;color:#555;font-weight:400;">Not attempted</div>
<svg style="position:absolute;left:1283.2px;top:595px;" width="16" height="20" viewBox="0 0 16 20"><path d="M7.7 5.5 A6.1 6.1 0 1 1 1.6 12.2" fill="none" stroke="#5f5f5f" stroke-width="1.6"/><path d="M1.3 5.4 L6.9 1.8 L6.9 8.9 Z" fill="#5f5f5f"/></svg>
<svg style="position:absolute;left:1309px;top:595px;" width="21" height="20" viewBox="0 0 21 20"><circle cx="10.3" cy="9.6" r="8.7" fill="none" stroke="#5f5f5f" stroke-width="1.5"/><path d="M10.3 1.6 V3.9 M10.3 15.3 V17.6 M1.6 9.6 H3.9 M16.7 9.6 H19" stroke="#5f5f5f" stroke-width="1.3"/><path d="M6.7 7.8 L10.1 11.0 L14.7 6.2" fill="none" stroke="#5f5f5f" stroke-width="1.5"/></svg>
<svg style="position:absolute;left:1339px;top:597px;" width="20" height="19" viewBox="0 0 20 19"><path d="M4.9 9.75 A6.6 6.6 0 1 1 7.6 15.1" fill="none" stroke="#5f5f5f" stroke-width="1.5"/><path d="M1.8 9.1 L8.0 9.1 L4.6 13.2 Z" fill="#5f5f5f"/><path d="M11.6 5.4 V9.5 L13.7 12.1" fill="none" stroke="#5f5f5f" stroke-width="1.5"/></svg>
<div class="t" style="left:1438.3px;top:598.1px;font-size:14px;line-height:14px;color:#555;font-weight:400;">Janet</div>
<div class="t" style="left:1589.3px;top:598.1px;font-size:14px;line-height:14px;color:#555;font-weight:400;">Blackburn</div>
<div style="position:absolute;left:1732px;top:585px;width:119px;height:40px;overflow:hidden">
<div class="t" style="left:8.2px;top:13.1px;font-size:14px;line-height:14px;color:#555;font-weight:400;letter-spacing:-0.2px;">noreply@youtestme.com</div>
</div>
<div style="position:absolute;left:482.3px;top:635.4px;width:18px;height:18px;background:#fff;border:1px solid #b5b5b5;border-radius:3px;box-sizing:border-box"></div>
<div class="t" style="left:529.4px;top:639.1px;font-size:14px;line-height:14px;color:#1f7bd2;font-weight:400;">Acrew1969</div>
<div class="t" style="left:668.7px;top:639.1px;font-size:14px;line-height:14px;color:#555;font-weight:400;letter-spacing:-0.13px;">Session - Montreal</div>
<div class="t" style="left:592.4px;width:600px;text-align:center;top:639.1px;font-size:14px;line-height:14px;color:#555;font-weight:400;">Not attempted</div>
<svg style="position:absolute;left:1283.2px;top:636px;" width="16" height="20" viewBox="0 0 16 20"><path d="M7.7 5.5 A6.1 6.1 0 1 1 1.6 12.2" fill="none" stroke="#5f5f5f" stroke-width="1.6"/><path d="M1.3 5.4 L6.9 1.8 L6.9 8.9 Z" fill="#5f5f5f"/></svg>
<svg style="position:absolute;left:1309px;top:636px;" width="21" height="20" viewBox="0 0 21 20"><circle cx="10.3" cy="9.6" r="8.7" fill="none" stroke="#5f5f5f" stroke-width="1.5"/><path d="M10.3 1.6 V3.9 M10.3 15.3 V17.6 M1.6 9.6 H3.9 M16.7 9.6 H19" stroke="#5f5f5f" stroke-width="1.3"/><path d="M6.7 7.8 L10.1 11.0 L14.7 6.2" fill="none" stroke="#5f5f5f" stroke-width="1.5"/></svg>
<svg style="position:absolute;left:1339px;top:638px;" width="20" height="19" viewBox="0 0 20 19"><path d="M4.9 9.75 A6.6 6.6 0 1 1 7.6 15.1" fill="none" stroke="#5f5f5f" stroke-width="1.5"/><path d="M1.8 9.1 L8.0 9.1 L4.6 13.2 Z" fill="#5f5f5f"/><path d="M11.6 5.4 V9.5 L13.7 12.1" fill="none" stroke="#5f5f5f" stroke-width="1.5"/></svg>
<div class="t" style="left:1438.3px;top:639.1px;font-size:14px;line-height:14px;color:#555;font-weight:400;">Eva</div>
<div class="t" style="left:1589.3px;top:639.1px;font-size:14px;line-height:14px;color:#555;font-weight:400;">Carpenter</div>
<div style="position:absolute;left:1732px;top:626px;width:119px;height:40px;overflow:hidden">
<div class="t" style="left:8.2px;top:13.1px;font-size:14px;line-height:14px;color:#555;font-weight:400;letter-spacing:-0.2px;">noreply@youtestme.com</div>
</div>
<div style="position:absolute;left:482.3px;top:676.4px;width:18px;height:18px;background:#fff;border:1px solid #b5b5b5;border-radius:3px;box-sizing:border-box"></div>
<svg style="position:absolute;left:482.3px;top:675.4px;" width="19" height="19" viewBox="0 0 19 19"><path d="M2.5 9.5 L7 14 L16.5 3.5" fill="none" stroke="#1a9ae6" stroke-width="3.2"/></svg>
<div class="t" style="left:529.4px;top:680.1px;font-size:14px;line-height:14px;color:#1f7bd2;font-weight:400;">adam</div>
<div class="t" style="left:668.7px;top:680.1px;font-size:14px;line-height:14px;color:#555;font-weight:400;letter-spacing:-0.13px;">Session - New York</div>
<div class="t" style="left:592.4px;width:600px;text-align:center;top:680.1px;font-size:14px;line-height:14px;color:#555;font-weight:400;">Not attempted</div>
<svg style="position:absolute;left:1283.2px;top:677px;" width="16" height="20" viewBox="0 0 16 20"><path d="M7.7 5.5 A6.1 6.1 0 1 1 1.6 12.2" fill="none" stroke="#5f5f5f" stroke-width="1.6"/><path d="M1.3 5.4 L6.9 1.8 L6.9 8.9 Z" fill="#5f5f5f"/></svg>
<svg style="position:absolute;left:1309px;top:677px;" width="21" height="20" viewBox="0 0 21 20"><circle cx="10.3" cy="9.6" r="8.7" fill="none" stroke="#5f5f5f" stroke-width="1.5"/><path d="M10.3 1.6 V3.9 M10.3 15.3 V17.6 M1.6 9.6 H3.9 M16.7 9.6 H19" stroke="#5f5f5f" stroke-width="1.3"/><path d="M6.7 7.8 L10.1 11.0 L14.7 6.2" fill="none" stroke="#5f5f5f" stroke-width="1.5"/></svg>
<svg style="position:absolute;left:1339px;top:679px;" width="20" height="19" viewBox="0 0 20 19"><path d="M4.9 9.75 A6.6 6.6 0 1 1 7.6 15.1" fill="none" stroke="#5f5f5f" stroke-width="1.5"/><path d="M1.8 9.1 L8.0 9.1 L4.6 13.2 Z" fill="#5f5f5f"/><path d="M11.6 5.4 V9.5 L13.7 12.1" fill="none" stroke="#5f5f5f" stroke-width="1.5"/></svg>
<div class="t" style="left:1438.3px;top:680.1px;font-size:14px;line-height:14px;color:#555;font-weight:400;">Adam</div>
<div class="t" style="left:1589.3px;top:680.1px;font-size:14px;line-height:14px;color:#555;font-weight:400;">Moore</div>
<div style="position:absolute;left:1732px;top:667px;width:119px;height:40px;overflow:hidden">
<div class="t" style="left:8.2px;top:13.1px;font-size:14px;line-height:14px;color:#555;font-weight:400;letter-spacing:-0.2px;">noreply@youtestme.com</div>
</div>
<div style="position:absolute;left:482.3px;top:717.4px;width:18px;height:18px;background:#fff;border:1px solid #b5b5b5;border-radius:3px;box-sizing:border-box"></div>
<div class="t" style="left:529.4px;top:721.1px;font-size:14px;line-height:14px;color:#1f7bd2;font-weight:400;">Adam</div>
<div class="t" style="left:668.7px;top:721.1px;font-size:14px;line-height:14px;color:#555;font-weight:400;letter-spacing:-0.13px;">Session - Toronto</div>
<div class="t" style="left:592.4px;width:600px;text-align:center;top:721.1px;font-size:14px;line-height:14px;color:#555;font-weight:400;">Finished</div>
<div class="t" style="right:838.2px;top:721.1px;font-size:14px;line-height:14px;color:#555;font-weight:400;">75.47</div>
<div class="t" style="left:848.6px;width:600px;text-align:center;top:721.1px;font-size:14px;line-height:14px;color:#3dbb68;font-weight:400;">Passed</div>
<svg style="position:absolute;left:1268px;top:718px;" width="16" height="20" viewBox="0 0 16 20"><path d="M7.7 5.5 A6.1 6.1 0 1 1 1.6 12.2" fill="none" stroke="#5f5f5f" stroke-width="1.6"/><path d="M1.3 5.4 L6.9 1.8 L6.9 8.9 Z" fill="#5f5f5f"/></svg>
<svg style="position:absolute;left:1293px;top:718px;" width="21" height="20" viewBox="0 0 21 20"><path d="M15.8 7.0 A6.8 6.8 0 0 0 3.3 10.6 M4.1 15.2 A6.8 6.8 0 0 0 16.9 12.6" fill="none" stroke="#5f5f5f" stroke-width="1.5"/><path d="M0.7 10.6 L5.6 10.6 L3.2 14.3 Z M15.6 11.6 L20.4 11.6 L18.0 7.9 Z" fill="#5f5f5f"/><path d="M7.2 10.2 L9.5 13.0 L13.8 8.4" fill="none" stroke="#5f5f5f" stroke-width="1.5"/></svg>
<svg style="position:absolute;left:1326.2px;top:719.2px;" width="14" height="19" viewBox="0 0 14 19"><rect x="0.8" y="9.6" width="3" height="9" fill="#5f5f5f"/><rect x="5.8" y="4.7" width="3.1" height="13.9" fill="#5f5f5f"/><rect x="10.8" y="0.2" width="3" height="18.4" fill="#5f5f5f"/></svg>
<svg style="position:absolute;left:1354.3px;top:720px;" width="20" height="19" viewBox="0 0 20 19"><path d="M4.9 9.75 A6.6 6.6 0 1 1 7.6 15.1" fill="none" stroke="#5f5f5f" stroke-width="1.5"/><path d="M1.8 9.1 L8.0 9.1 L4.6 13.2 Z" fill="#5f5f5f"/><path d="M11.6 5.4 V9.5 L13.7 12.1" fill="none" stroke="#5f5f5f" stroke-width="1.5"/></svg>
<div class="t" style="left:1438.3px;top:721.1px;font-size:14px;line-height:14px;color:#555;font-weight:400;">Adam</div>
<div class="t" style="left:1589.3px;top:721.1px;font-size:14px;line-height:14px;color:#555;font-weight:400;">Johnson</div>
<div style="position:absolute;left:1732px;top:708px;width:119px;height:40px;overflow:hidden">
<div class="t" style="left:8.2px;top:13.1px;font-size:14px;line-height:14px;color:#555;font-weight:400;letter-spacing:-0.2px;">noreply@youtestme.com</div>
</div>
<div style="position:absolute;left:482.3px;top:758.4px;width:18px;height:18px;background:#fff;border:1px solid #b5b5b5;border-radius:3px;box-sizing:border-box"></div>
<div class="t" style="left:529.4px;top:762.1px;font-size:14px;line-height:14px;color:#1f7bd2;font-weight:400;">Afrand</div>
<div class="t" style="left:668.7px;top:762.1px;font-size:14px;line-height:14px;color:#555;font-weight:400;letter-spacing:-0.13px;">Session - Toronto</div>
<div class="t" style="left:592.4px;width:600px;text-align:center;top:762.1px;font-size:14px;line-height:14px;color:#555;font-weight:400;">Not attempted</div>
<svg style="position:absolute;left:1283.2px;top:759px;" width="16" height="20" viewBox="0 0 16 20"><path d="M7.7 5.5 A6.1 6.1 0 1 1 1.6 12.2" fill="none" stroke="#5f5f5f" stroke-width="1.6"/><path d="M1.3 5.4 L6.9 1.8 L6.9 8.9 Z" fill="#5f5f5f"/></svg>
<svg style="position:absolute;left:1309px;top:759px;" width="21" height="20" viewBox="0 0 21 20"><circle cx="10.3" cy="9.6" r="8.7" fill="none" stroke="#5f5f5f" stroke-width="1.5"/><path d="M10.3 1.6 V3.9 M10.3 15.3 V17.6 M1.6 9.6 H3.9 M16.7 9.6 H19" stroke="#5f5f5f" stroke-width="1.3"/><path d="M6.7 7.8 L10.1 11.0 L14.7 6.2" fill="none" stroke="#5f5f5f" stroke-width="1.5"/></svg>
<svg style="position:absolute;left:1339px;top:761px;" width="20" height="19" viewBox="0 0 20 19"><path d="M4.9 9.75 A6.6 6.6 0 1 1 7.6 15.1" fill="none" stroke="#5f5f5f" stroke-width="1.5"/><path d="M1.8 9.1 L8.0 9.1 L4.6 13.2 Z" fill="#5f5f5f"/><path d="M11.6 5.4 V9.5 L13.7 12.1" fill="none" stroke="#5f5f5f" stroke-width="1.5"/></svg>
<div class="t" style="left:1438.3px;top:762.1px;font-size:14px;line-height:14px;color:#555;font-weight:400;">Mary</div>
<div class="t" style="left:1589.3px;top:762.1px;font-size:14px;line-height:14px;color:#555;font-weight:400;">Dukes</div>
<div style="position:absolute;left:1732px;top:749px;width:119px;height:40px;overflow:hidden">
<div class="t" style="left:8.2px;top:13.1px;font-size:14px;line-height:14px;color:#555;font-weight:400;letter-spacing:-0.2px;">noreply@youtestme.com</div>
</div>
<div style="position:absolute;left:1429px;top:780px;width:80px;height:8px;background:#a9cbe0;border-radius:4px"></div>
<div style="position:absolute;left:1320.8px;top:359.8px;width:28.4px;height:28.4px;border-radius:50%;background:#e54646;box-shadow:0 2px 2px rgba(0,0,0,0.35)"></div>
<div class="t" style="left:1035.0px;width:600px;text-align:center;top:361.8px;font-size:23px;line-height:23px;color:#fff;font-weight:400;">3</div>
<div style="position:absolute;left:470.2px;top:803.4px;width:13.6px;height:2px;background:#555"></div>
<div style="position:absolute;left:470.2px;top:806.4px;width:13.6px;height:2px;background:#555"></div>
<div style="position:absolute;left:470.2px;top:809.4px;width:13.6px;height:2px;background:#555"></div>
<div style="position:absolute;left:470.2px;top:812.4px;width:13.6px;height:2px;background:#555"></div>
<div class="t" style="left:490.2px;top:802.1px;font-size:14px;line-height:14px;color:#555;font-weight:400;letter-spacing:0.45px;">Displayed columns</div>
<svg style="position:absolute;left:983px;top:806px;" width="11" height="7" viewBox="0 0 11 7"><rect x="0.6" y="0" width="1.3" height="6" fill="#c4c4c4"/><path d="M2.4 3 L9.6 0 V6 Z" fill="#c4c4c4"/></svg>
<svg style="position:absolute;left:1007px;top:806px;" width="13" height="7" viewBox="0 0 13 7"><path d="M0.5 3 L6 0.3 V5.7Z M5.8 3 L12.2 0 V6 Z" fill="#c4c4c4"/></svg>
<div class="t" style="left:749.8px;width:600px;text-align:center;top:803.2px;font-size:15px;line-height:15px;color:#333;font-weight:400;-webkit-text-stroke:0.4px #333;">1</div>
<div style="position:absolute;left:1036px;top:819.6px;width:30px;height:3px;background:#0e9de9"></div>
<div class="t" style="left:783.8px;width:600px;text-align:center;top:803.2px;font-size:15px;line-height:15px;color:#444;font-weight:400;">2</div>
<div class="t" style="left:816.6px;width:600px;text-align:center;top:803.2px;font-size:15px;line-height:15px;color:#444;font-weight:400;">3</div>
<div class="t" style="left:849.4px;width:600px;text-align:center;top:803.2px;font-size:15px;line-height:15px;color:#444;font-weight:400;">4</div>
<div class="t" style="left:882.6px;width:600px;text-align:center;top:803.2px;font-size:15px;line-height:15px;color:#444;font-weight:400;">5</div>
<svg style="position:absolute;left:1217px;top:806px;" width="13" height="7" viewBox="0 0 13 7"><path d="M0 0 L6.4 3 L0 6Z M6 0.3 L12 3 L6 5.7Z" fill="#555"/></svg>
<svg style="position:absolute;left:1244px;top:806px;" width="11" height="7" viewBox="0 0 11 7"><path d="M0 0 L7.2 3 L0 6Z" fill="#555"/><rect x="8.6" y="0" width="1.4" height="6" fill="#555"/></svg>
<div style="position:absolute;left:1276px;top:797px;width:48px;height:26px;background:#fff;border:1px solid #c9d3ee;box-sizing:border-box"></div>
<div class="t" style="left:1280.7px;top:802.9px;font-size:15px;line-height:15px;color:#444;font-weight:400;">10</div>
<svg style="position:absolute;left:1308px;top:806px;" width="12" height="8" viewBox="0 0 12 8"><path d="M1.5 1.5 L6 6 L10.5 1.5" fill="none" stroke="#444" stroke-width="1.8"/></svg>
<div class="t" style="right:78.8px;top:802.1px;font-size:14px;line-height:14px;color:#555;font-weight:400;letter-spacing:0.2px;">Rows: 70</div>
<div style="position:absolute;left:460px;top:847px;width:91px;height:32px;background:#f4f7fb;border:1px solid #c9d3ea;border-radius:3px;box-sizing:border-box"></div>
<div class="t" style="left:475.5px;top:856.2px;font-size:14px;line-height:14px;color:#555;font-weight:400;letter-spacing:0.6px;">Actions</div>
<div style="position:absolute;left:531.6px;top:862.4px;width:0;height:0;border-left:3.8px solid transparent;border-right:3.8px solid transparent;border-top:4px solid #777"></div>
<div style="position:absolute;left:570px;top:854px;width:18px;height:18px;background:#fff;border:1px solid #b5b5b5;border-radius:3px;box-sizing:border-box"></div>
<div class="t" style="left:598.3px;top:855.3px;font-size:14px;line-height:14px;color:#333;font-weight:700;">Show suspended attempts</div>
<svg style="position:absolute;left:1748px;top:847.5px;" width="23" height="31" viewBox="0 0 23 31"><defs><linearGradient id="dg1" x1="0" y1="0" x2="0" y2="1"><stop offset="0" stop-color="#f4f4f4"/><stop offset="1" stop-color="#e4e4e4"/></linearGradient></defs><path d="M1 0.5 H14.3 L22 8.2 V30 H1 Z" fill="url(#dg1)" stroke="#e0e0e0" stroke-width="0.8"/><path d="M14.3 0.5 V8.2 H22" fill="#fff" stroke="#ddd" stroke-width="0.8"/><g fill="#cfcfcf"><rect x="3.2" y="7" width="3.6" height="1.7"/><rect x="9" y="7" width="3.6" height="1.7"/><rect x="14.8" y="7" width="3.6" height="1.7"/><rect x="3.2" y="10.5" width="3.6" height="1.7"/><rect x="9" y="10.5" width="3.6" height="1.7"/><rect x="14.8" y="10.5" width="3.6" height="1.7"/><rect x="3.2" y="14" width="3.6" height="1.7"/><rect x="9" y="14" width="3.6" height="1.7"/><rect x="14.8" y="14" width="3.6" height="1.7"/><rect x="3.2" y="17.5" width="3.6" height="1.7"/><rect x="9" y="17.5" width="3.6" height="1.7"/><rect x="14.8" y="17.5" width="3.6" height="1.7"/><rect x="3.2" y="21" width="3.6" height="1.7"/><rect x="9" y="21" width="3.6" height="1.7"/><rect x="14.8" y="21" width="3.6" height="1.7"/><rect x="3.2" y="24.5" width="3.6" height="1.7"/><rect x="9" y="24.5" width="3.6" height="1.7"/><rect x="14.8" y="24.5" width="3.6" height="1.7"/></g><circle cx="11.3" cy="19" r="7.2" fill="#1c7a46"/><path d="M7.5 19.2 L10.2 21.8 L15 16.6" fill="none" stroke="#fff" stroke-width="2"/></svg>
<svg style="position:absolute;left:1784px;top:847px;" width="24" height="29" viewBox="0 0 24 29"><path d="M1.5 0.5 H17 L23.5 7 V28 H1.5 Z" fill="url(#dg1)" stroke="#e0e0e0" stroke-width="0.8"/><path d="M17 0.5 V7 H23.5" fill="#fff" stroke="#ddd" stroke-width="0.8"/><g fill="#8a8a8a"><rect x="4" y="5" width="3.5" height="1.8"/><rect x="10" y="5" width="3.5" height="1.8"/><rect x="4" y="8" width="3.5" height="1.8"/><rect x="10" y="8" width="3.5" height="1.8"/><rect x="16" y="8" width="3.5" height="1.8"/><rect x="4" y="24" width="3.5" height="1.8"/><rect x="10" y="24" width="3.5" height="1.8"/><rect x="16" y="24" width="3.5" height="1.8"/></g><defs><linearGradient id="gx" x1="0" y1="0" x2="0" y2="1"><stop offset="0" stop-color="#2f9a5c"/><stop offset="1" stop-color="#176a3a"/></linearGradient><linearGradient id="gp" x1="0" y1="0" x2="0" y2="1"><stop offset="0" stop-color="#e61010"/><stop offset="1" stop-color="#a00808"/></linearGradient></defs><rect x="0" y="12" width="24" height="10" fill="url(#gx)"/><text x="12.5" y="20.5" font-family="Liberation Sans" font-weight="700" font-size="8.5" fill="#fff" text-anchor="middle">XLS</text></svg>
<svg style="position:absolute;left:1816px;top:847px;" width="25" height="29" viewBox="0 0 25 29"><path d="M1.5 0.5 H16 L23.5 8 V28.5 H1.5 Z" fill="url(#dg1)" stroke="#e0e0e0" stroke-width="0.8"/><path d="M16 0.5 V8 H23.5" fill="#fff" stroke="#ddd" stroke-width="0.8"/><rect x="0" y="12.8" width="25" height="10.5" fill="url(#gp)"/><text x="12.5" y="21.6" font-family="Liberation Sans" font-weight="700" font-size="9" fill="#fff" text-anchor="middle">PDF</text></svg>
<div style="position:absolute;left:45.8px;top:479px;width:25px;height:25px;background:#fff;border:1px solid #aaa;border-radius:50%;box-sizing:border-box"></div>
<svg style="position:absolute;left:52px;top:482px;" width="14" height="19" viewBox="0 0 14 19"><path d="M3.6 2.5 L9.4 9.2 L3.6 15.9" fill="none" stroke="#999" stroke-width="3" stroke-linecap="round" stroke-linejoin="round"/></svg>
</body></html>
